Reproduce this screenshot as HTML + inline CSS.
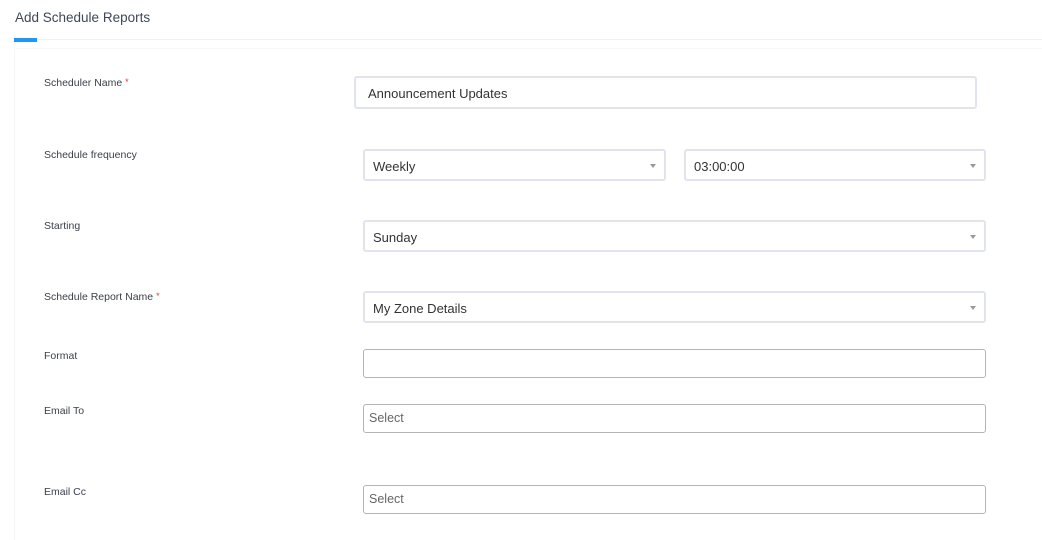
<!DOCTYPE html>
<html><head><meta charset="utf-8"><style>
*{box-sizing:border-box;margin:0;padding:0}
body{width:1042px;height:540px;background:#fff;font-family:"Liberation Sans",Arial,sans-serif;position:relative;overflow:hidden;color:#333}
.title{position:absolute;left:15px;top:10px;font-size:13.5px;color:#3e4857}
.bar{position:absolute;left:14px;top:38px;width:23px;height:4px;background:#2196f3}
.line{position:absolute;left:37px;top:39px;right:0;height:1px;background:#eef0f3}
.card{position:absolute;left:14px;top:48px;right:0;bottom:0;border-left:1px solid #f5f5f5;border-top:1px solid #f7f7f7}
.lbl{position:absolute;left:44px;font-size:10.5px;color:#3a3f4a}
.lbl b{color:#e53935;font-weight:normal;font-size:9px;vertical-align:top}
.f{position:absolute;border:2px solid #e1e4ee;border-radius:3px;font-size:13px;color:#333;padding-left:8px;padding-top:2px;display:flex;align-items:center}
.f.s::after{content:"";position:absolute;right:8px;top:50%;margin-top:-1px;border-left:3.5px solid transparent;border-right:3.5px solid transparent;border-top:4px solid #999}
.g{position:absolute;border:1px solid #b5b5b5;border-radius:3px;font-size:12.5px;color:#666;padding-left:5px;padding-bottom:2px;display:flex;align-items:center}
</style></head><body>
<div class="title">Add Schedule Reports</div>
<div class="line"></div><div class="bar"></div>
<div class="card"></div>
<div class="lbl" style="top:77px">Scheduler Name <b>*</b></div>
<div class="f" style="left:354px;top:76px;width:623px;height:33px;padding-left:12px">Announcement Updates</div>
<div class="lbl" style="top:149px">Schedule frequency</div>
<div class="f s" style="left:363px;top:149px;width:303px;height:32px">Weekly</div>
<div class="f s" style="left:684px;top:149px;width:302px;height:32px">03:00:00</div>
<div class="lbl" style="top:220px">Starting</div>
<div class="f s" style="left:363px;top:220px;width:623px;height:32px">Sunday</div>
<div class="lbl" style="top:291px">Schedule Report Name <b>*</b></div>
<div class="f s" style="left:363px;top:291px;width:623px;height:32px">My Zone Details</div>
<div class="lbl" style="top:350px">Format</div>
<div class="g" style="left:363px;top:349px;width:623px;height:29px"></div>
<div class="lbl" style="top:405px">Email To</div>
<div class="g" style="left:363px;top:404px;width:623px;height:29px">Select</div>
<div class="lbl" style="top:486px">Email Cc</div>
<div class="g" style="left:363px;top:485px;width:623px;height:29px">Select</div>
</body></html>
